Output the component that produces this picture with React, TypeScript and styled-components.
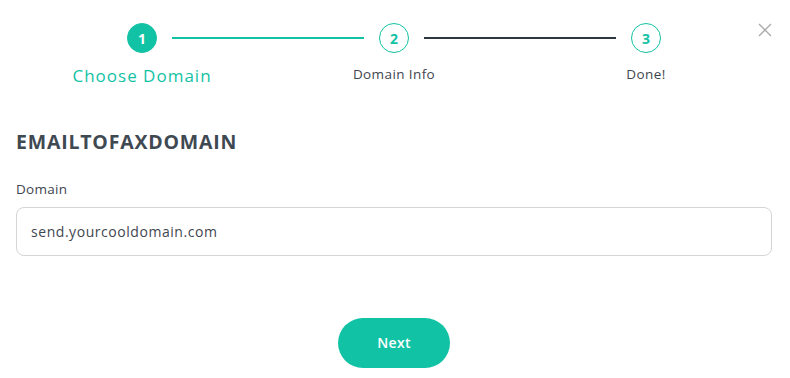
import React from "react";
import styled, { createGlobalStyle } from "styled-components";

const GlobalStyle = createGlobalStyle`
  html, body { margin: 0; padding: 0; background: #ffffff; }
  body { font-family: "Open Sans", "Liberation Sans", sans-serif; }
  * { box-sizing: border-box; }
`;

const TEAL = "#12c2a5";

const Modal = styled.div`
  position: relative;
  width: 790px;
  height: 378px;
  padding: 23px 18px 0 16px;
  background: #fff;
`;

const CloseButton = styled.button`
  position: absolute;
  top: 21px;
  right: 17px;
  width: 17px;
  height: 17px;
  padding: 0;
  border: 0;
  background: transparent;
  display: flex;
  align-items: center;
  justify-content: center;
  cursor: pointer;
`;

const StepRow = styled.div`
  display: flex;
  align-items: center;
  padding: 0 111px;
  height: 30px;
`;

const Circle = styled.div<{ $active?: boolean }>`
  flex: none;
  width: 30px;
  height: 30px;
  border-radius: 50%;
  border: 1.5px solid ${TEAL};
  background: ${(p) => (p.$active ? TEAL : "#fff")};
  color: ${(p) => (p.$active ? "#fff" : TEAL)};
  display: flex;
  align-items: center;
  justify-content: center;
  font-size: 14px;
  font-weight: 700;
`;

const Connector = styled.div<{ $done?: boolean }>`
  flex: 1;
  height: 2px;
  margin: 0 15px;
  background: ${(p) => (p.$done ? TEAL : "#2d3641")};
`;

const LabelRow = styled.div`
  display: grid;
  grid-template-columns: repeat(3, 1fr);
  margin-top: 10px;
  height: 30px;
`;

const StepLabel = styled.div<{ $active?: boolean }>`
  text-align: center;
  color: ${(p) => (p.$active ? TEAL : "#3f4650")};
  font-size: ${(p) => (p.$active ? "17px" : "13.5px")};
  letter-spacing: ${(p) => (p.$active ? "1px" : "0.4px")};
  line-height: ${(p) => (p.$active ? "26px" : "16px")};
  padding-top: ${(p) => (p.$active ? "0" : "3px")};
`;

const Title = styled.h2`
  margin: 36px 0 0 0;
  font-size: 19.5px;
  font-weight: 700;
  color: #3f4952;
  line-height: 26px;
  letter-spacing: 0.8px;
`;

const FieldLabel = styled.label`
  display: block;
  margin-top: 25px;
  font-size: 13.5px;
  line-height: 18px;
  letter-spacing: 0.3px;
  color: #3f4650;
`;

const Input = styled.input`
  display: block;
  width: 756px;
  height: 49px;
  margin-top: 9px;
  padding: 0 14px;
  border: 1px solid #d5d5d5;
  border-radius: 8px;
  font-family: inherit;
  font-size: 14px;
  letter-spacing: 0.55px;
  color: #3f4650;
  outline: none;
  background: #fff;
`;

const Footer = styled.div`
  display: flex;
  justify-content: center;
  margin-top: 62px;
`;

const NextButton = styled.button`
  width: 112px;
  height: 50px;
  border: 0;
  border-radius: 25px;
  background: ${TEAL};
  color: #fff;
  font-family: inherit;
  font-size: 14px;
  font-weight: 600;
  letter-spacing: 0.3px;
  line-height: 1;
  padding-bottom: 2px;
  cursor: pointer;
`;

export default function App() {
  return (
    <>
      <GlobalStyle />
      <Modal>
        <CloseButton aria-label="Close">
          <svg width="14" height="14" viewBox="0 0 14 14">
            <path d="M1 1 L13 13 M13 1 L1 13" stroke="#a9a9a9" strokeWidth="1.3" fill="none" />
          </svg>
        </CloseButton>
        <StepRow>
          <Circle $active>1</Circle>
          <Connector $done />
          <Circle>2</Circle>
          <Connector />
          <Circle>3</Circle>
        </StepRow>
        <LabelRow>
          <StepLabel $active>Choose Domain</StepLabel>
          <StepLabel>Domain Info</StepLabel>
          <StepLabel>Done!</StepLabel>
        </LabelRow>
        <Title>EMAILTOFAXDOMAIN</Title>
        <FieldLabel htmlFor="domain">Domain</FieldLabel>
        <Input id="domain" defaultValue="send.yourcooldomain.com" />
        <Footer>
          <NextButton>Next</NextButton>
        </Footer>
      </Modal>
    </>
  );
}
